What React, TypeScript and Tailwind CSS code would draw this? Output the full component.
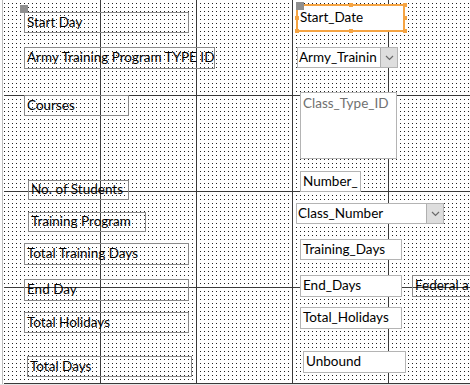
import React from "react";

const fontCls = "font-['Lato','Open_Sans',sans-serif] text-[13.5px] leading-none whitespace-nowrap overflow-hidden";

function Label({ cls, text }: { cls: string; text: string }) {
  return (
    <div className={"absolute border border-[#8a8a8a] flex items-center pl-[2px] text-black " + fontCls + " " + cls}>
      {text}
    </div>
  );
}

function TextBox({ cls, text, grey = false, top = false }: { cls: string; text: string; grey?: boolean; top?: boolean }) {
  return (
    <div
      className={
        "absolute bg-white border border-[#b4b4b4] flex pl-[2px] " +
        fontCls +
        " " +
        (top ? "items-start pt-[4px] " : "items-center ") +
        (grey ? "text-[#707070] " : "text-black ") +
        cls
      }
    >
      {text}
    </div>
  );
}

function Combo({ cls, text }: { cls: string; text: string }) {
  return (
    <div className={"absolute bg-white border border-[#b4b4b4] flex text-black " + fontCls + " " + cls}>
      <div className="flex-1 overflow-hidden flex items-center pl-[1px]">{text}</div>
      <div className="h-full w-[17px] bg-[#dedede] border-l border-[#b0b0b0] flex items-center justify-center">
        <svg width="9" height="6" viewBox="0 0 9 6">
          <path d="M1 1 L4.5 4.5 L8 1" fill="none" stroke="#6a6a6a" strokeWidth="1.2" />
        </svg>
      </div>
    </div>
  );
}

function Handle({ cls }: { cls: string }) {
  return <div className={"absolute w-[4px] h-[4px] bg-[#f5a443] " + cls} />;
}

export default function App() {
  const vLines = [100, 196, 292, 388];
  const hLines = [95, 191, 287, 383];
  return (
    <div className="relative w-[470px] h-[385px] bg-white overflow-hidden">
      {/* design grid */}
      <svg className="absolute left-0 top-0" width="470" height="385">
        <defs>
          <pattern id="dots" x="0" y="3" width="4" height="4" patternUnits="userSpaceOnUse">
            <rect x="0" y="0" width="1" height="1" fill="#222" />
          </pattern>
        </defs>
        <rect x="4" y="0" width="466" height="383" fill="url(#dots)" />
        {vLines.map((x) => (
          <rect key={"v" + x} x={x} y="0" width="1" height="384" fill="#3a3a3a" />
        ))}
        {hLines.map((y) => (
          <rect key={"h" + y} x="4" y={y} width="466" height="1" fill="#3a3a3a" />
        ))}
        <rect x="2" y="0" width="1" height="385" fill="#bdbdbd" />
        <rect x="0" y="384" width="470" height="1" fill="#e6e6e6" />
      </svg>

      {/* labels */}
      <Label cls="left-[24px] top-[12px] w-[165px] h-[21px]" text="Start Day" />
      <Label cls="left-[24px] top-[47px] w-[191px] h-[22px]" text="Army Training Program TYPE ID" />
      <Label cls="left-[24px] top-[95px] w-[105px] h-[21px]" text="Courses" />
      <Label cls="left-[28px] top-[180px] w-[101px] h-[20px]" text="No. of Students" />
      <Label cls="left-[28px] top-[212px] w-[118px] h-[20px]" text="Training Program" />
      <Label cls="left-[24px] top-[243px] w-[165px] h-[22px]" text="Total Training Days" />
      <Label cls="left-[24px] top-[279px] w-[165px] h-[22px]" text="End Day" />
      <Label cls="left-[24px] top-[312px] w-[165px] h-[21px]" text="Total Holidays" />
      <Label cls="left-[27px] top-[356px] w-[165px] h-[21px]" text="Total Days" />
      <Label cls="left-[412px] top-[275px] w-[70px] h-[22px]" text="Federal a" />

      {/* selected control */}
      <TextBox cls="left-[297px] top-[5px] w-[107px] h-[26px]" text="Start_Date" />
      <div className="absolute left-[296px] top-[4px] w-[109px] h-[28px] border-2 border-[#f5a443]" />
      <Handle cls="left-[349px] top-[3px]" />
      <Handle cls="left-[403px] top-[3px]" />
      <Handle cls="left-[295px] top-[16px]" />
      <Handle cls="left-[403px] top-[16px]" />
      <Handle cls="left-[295px] top-[29px]" />
      <Handle cls="left-[349px] top-[29px]" />
      <Handle cls="left-[403px] top-[29px]" />
      <div className="absolute left-[296px] top-[2px] w-[8px] h-[8px] bg-[#8f8f8f]" />
      <div className="absolute left-[20px] top-[5px] w-[8px] h-[8px] bg-[#8f8f8f]" />

      {/* other controls */}
      <Combo cls="left-[297px] top-[47px] w-[101px] h-[21px]" text="Army_Trainin" />
      <TextBox cls="left-[300px] top-[92px] w-[97px] h-[67px]" text="Class_Type_ID" grey top />
      <TextBox cls="left-[300px] top-[171px] w-[61px] h-[21px]" text="Number_" />
      <Combo cls="left-[296px] top-[203px] w-[148px] h-[21px]" text="Class_Number" />
      <TextBox cls="left-[300px] top-[239px] w-[102px] h-[21px]" text="Training_Days" />
      <TextBox cls="left-[300px] top-[275px] w-[102px] h-[22px]" text="End_Days" />
      <TextBox cls="left-[300px] top-[307px] w-[102px] h-[22px]" text="Total_Holidays" />
      <TextBox cls="left-[303px] top-[351px] w-[103px] h-[22px]" text="Unbound" />
    </div>
  );
}
